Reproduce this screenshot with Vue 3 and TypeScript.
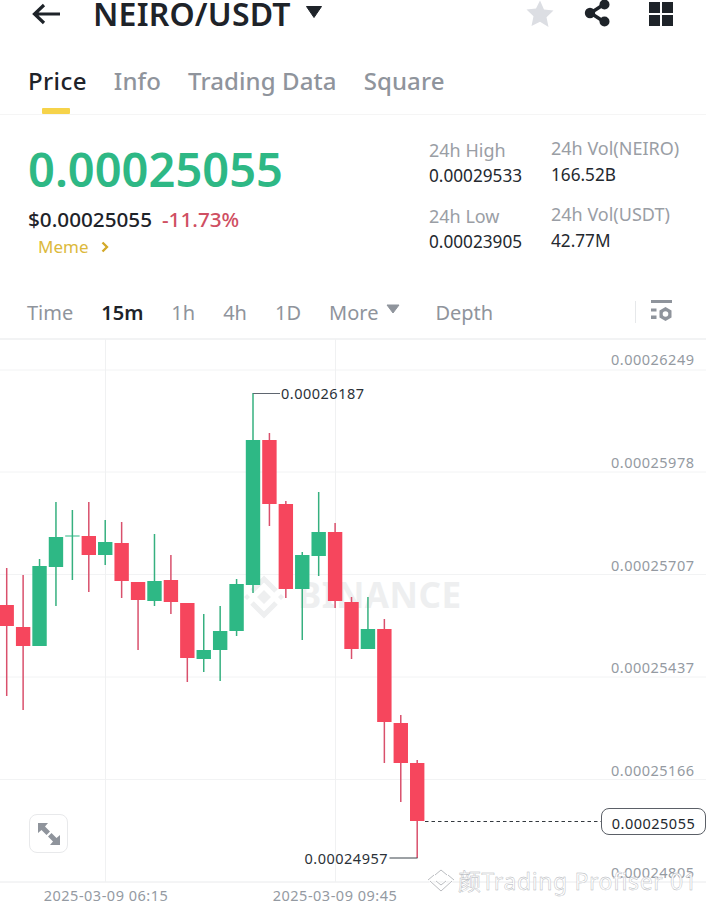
<script setup lang="ts">
interface Candle {
  up: boolean
  x: number
  top: number
  bottom: number
  high: number
  low: number
}

// [up, bodyTop, bodyBottom, wickHigh, wickLow]
const raw: [boolean, number, number, number, number][] = [
  [false, 605, 626, 568, 696],
  [false, 627, 646, 575, 710],
  [true, 566, 646, 559, 646],
  [true, 537, 567, 502, 606],
  [true, 535.5, 536.5, 510, 580],
  [false, 536, 555, 502, 592],
  [true, 542, 555, 520, 565],
  [false, 543, 581, 522, 598],
  [false, 582, 600, 582, 650],
  [true, 581, 601, 534, 606],
  [false, 580, 602, 555, 614],
  [false, 603, 658, 603, 682],
  [true, 650, 659, 614, 672],
  [true, 631, 650, 606, 681],
  [true, 584, 631, 579, 636],
  [true, 440, 585, 393, 593],
  [false, 440, 504, 433, 526],
  [false, 504, 589, 501, 598],
  [true, 555, 589, 552, 640],
  [true, 532, 556, 492, 576],
  [false, 532, 601, 523, 608],
  [false, 602, 649, 597, 659],
  [true, 629, 649, 597, 649],
  [false, 629, 722, 619, 763],
  [false, 723, 763, 715, 802],
  [false, 763, 821, 760, 858]
]

const candles: Candle[] = raw.map(([up, top, bottom, high, low], i) => ({
  up,
  x: 6.7 + i * 16.42,
  top,
  bottom,
  high,
  low
}))

const gridY = [370, 472, 574.5, 677, 779.5]
const gridX = [105.5, 335.5]
const axis = [
  { y: 360, label: '0.00026249' },
  { y: 463, label: '0.00025978' },
  { y: 566, label: '0.00025707' },
  { y: 668, label: '0.00025437' },
  { y: 771, label: '0.00025166' },
  { y: 873, label: '0.00024805' }
]
const tabs = ['Info', 'Trading Data', 'Square']
const ranges = ['1h', '4h', '1D']
</script>

<template>
  <div class="page">
    <header class="top">
      <svg class="back" width="30" height="24" viewBox="0 0 30 24">
        <path d="M13 3 3.500 12 13 21M4 12h25" fill="none" stroke="#1e2329" stroke-width="3.200" />
      </svg>
      <span class="pair">NEIRO/USDT</span>
      <svg class="caret" width="18" height="14" viewBox="0 0 18 14">
        <path d="M1.500 1.500h15L9 12.500z" fill="#1e2329" stroke="#1e2329" stroke-linejoin="round" />
      </svg>
      <svg class="star" width="28" height="28" viewBox="0 0 28 28">
        <path d="M14 .5l4 9 9.500 1-7 6.700 2 9.800L14 21.800 5.500 26l2-9.800-7-6.700 9.500-1z" fill="#dcdee3" />
      </svg>
      <svg class="share" width="28" height="28" viewBox="0 0 28 28">
        <path d="M20.500 4 6.500 13 20.500 22" fill="none" stroke="#1e2329" stroke-width="3.400" />
        <circle cx="20.500" cy="4.500" r="5" fill="#1e2329" />
        <circle cx="6" cy="13" r="5.200" fill="#1e2329" />
        <circle cx="20.500" cy="21.500" r="5" fill="#1e2329" />
      </svg>
      <div class="grid4"><i></i><i></i><i></i><i></i></div>
    </header>

    <nav class="tabs">
      <span class="tab active">Price</span>
      <span v-for="t in tabs" :key="t" class="tab">{{ t }}</span>
    </nav>

    <section class="summary">
      <div class="left">
        <div class="price">0.00025055</div>
        <div class="sub">
          <span class="usd">$0.00025055</span>
          <span class="pct">-11.73%</span>
        </div>
        <div class="meme">
          Meme
          <svg width="10" height="12" viewBox="0 0 10 12">
            <path d="M2.500 1.500 7 6l-4.500 4.500" fill="none" stroke="#d3a928" stroke-width="2.300" />
          </svg>
        </div>
      </div>
      <div class="stats">
        <div class="stat s1"><label>24h High</label><b>0.00029533</b></div>
        <div class="stat s2"><label>24h Vol(NEIRO)</label><b>166.52B</b></div>
        <div class="stat s3"><label>24h Low</label><b>0.00023905</b></div>
        <div class="stat s4"><label>24h Vol(USDT)</label><b>42.77M</b></div>
      </div>
    </section>

    <div class="ranges">
      <span class="r r-time">Time</span>
      <span class="r r-on">15m</span>
      <span v-for="r in ranges" :key="r" class="r">{{ r }}</span>
      <span class="r r-more">More</span>
      <svg class="more-caret" width="14" height="10" viewBox="0 0 14 10">
        <path d="M1 1h12L7 9z" fill="#8f949c" stroke="#8f949c" stroke-linejoin="round" />
      </svg>
      <span class="r r-depth">Depth</span>
      <span class="spacer"></span>
      <span class="divider"></span>
      <svg class="settings" width="24" height="24" viewBox="0 0 24 24">
        <rect x="2" y="1" width="21" height="3" fill="#8f949c" />
        <rect x="2" y="9.500" width="5.500" height="3" fill="#8f949c" />
        <rect x="2" y="16.500" width="5.500" height="3.500" fill="#8f949c" />
        <path d="M16.500 8l6 3.500v7l-6 3.500-6-3.500v-7z" fill="#8f949c" />
        <circle cx="16.500" cy="15" r="2.800" fill="#fff" />
      </svg>
    </div>

    <div class="chart">
      <svg class="plot" width="706" height="903" viewBox="0 0 706 903">
        <line x1="0" x2="706" y1="339" y2="339" stroke="#eeeff1" stroke-width="1.500" />
        <line v-for="y in gridY" :key="y" x1="0" x2="706" :y1="y" :y2="y" stroke="#f2f3f4" />
        <line x1="0" x2="706" y1="882" y2="882" stroke="#e9eaec" />
        <line v-for="x in gridX" :key="x" :x1="x" :x2="x" y1="339" y2="882" stroke="#f0f1f2" />

        <g class="mark">
          <path d="M252 591l12-12 12 12M252 603l12 12 12-12" fill="none" stroke="#eeeff0" stroke-width="5" />
          <path d="M264 590l7 7-7 7-7-7zM247 594l3 3-3 3-3-3zM281 594l3 3-3 3-3-3z" fill="#eeeff0" />
          <text x="298" y="608" class="mark-text">BINANCE</text>
        </g>

        <g v-for="(c, i) in candles" :key="i">
          <line
            :x1="c.x"
            :x2="c.x"
            :y1="c.high"
            :y2="c.low"
            :stroke="c.up ? '#36b07f' : '#d9506c'"
            stroke-width="1.500"
          />
          <rect
            :x="c.x - 7.200"
            :y="c.top"
            width="14.400"
            :height="c.bottom - c.top"
            :fill="c.up ? '#2eb885' : '#f6465d'"
          />
        </g>

        <path d="M253 393.500h27" fill="none" stroke="#5f6670" />
        <path d="M417.500 858h-28" fill="none" stroke="#3b424a" />
        <line x1="425" x2="601" y1="821.500" y2="821.500" stroke="#33393f" stroke-dasharray="3.500 3" />

        <text x="281" y="399" class="tag">0.00026187</text>
        <text x="304.500" y="864" class="tag">0.00024957</text>
        <text v-for="a in axis" :key="a.y" x="694.500" :y="a.y + 5" text-anchor="end" class="axis">{{ a.label }}</text>
        <text x="106" y="901" text-anchor="middle" class="axis">2025-03-09 06:15</text>
        <text x="335" y="901" text-anchor="middle" class="axis">2025-03-09 09:45</text>
      </svg>

      <div class="last">0.00025055</div>

      <button class="expand" type="button" aria-label="Expand">
        <svg width="24" height="24" viewBox="0 0 24 24">
          <path d="M1 1h10L8 4.500l5 5-3.500 3.500-5-5L1 11z" fill="#8f949c" />
          <path d="M23 23H13l3-3.500-5-5 3.500-3.500 5 5L23 13z" fill="#8f949c" />
        </svg>
      </button>

      <div class="wm">
        <svg width="28" height="24" viewBox="0 0 28 24">
          <g fill="none" stroke="#fff" stroke-width="2.400">
            <path d="M1 11l6-5M27 11l-6-5M8 6l6-5 6 5M9 12l5 4 5-4M3 12l11 10 11-10" />
          </g>
          <g fill="none" stroke="#a8abb0" stroke-width=".8">
            <path d="M1 11l6-5M27 11l-6-5M8 6l6-5 6 5M9 12l5 4 5-4M3 12l11 10 11-10" />
          </g>
        </svg>
        <span>颜Trading Profiser 01</span>
      </div>
    </div>
  </div>
</template>

<style>
html,
body {
  margin: 0;
  background: #fff;
}
</style>

<style scoped>
.page {
  width: 706px;
  height: 903px;
  overflow: hidden;
  display: flex;
  flex-direction: column;
  background: #fff;
  font-family: 'Noto Sans', Roboto, sans-serif;
  color: #1e2329;
}

.top {
  height: 28px;
  display: flex;
  align-items: center;
  padding-left: 31px;
  flex: none;
}
.back {
  flex: none;
}
.pair {
  margin-left: 32px;
  font-size: 32px;
  font-weight: 600;
  line-height: 28px;
  letter-spacing: 0.2px;
  width: 200px;
  flex: none;
  white-space: nowrap;
}
.caret {
  margin-left: 12px;
  margin-top: -4px;
  flex: none;
}
.star {
  margin-left: auto;
  flex: none;
}
.share {
  margin-left: 30px;
  flex: none;
}
.grid4 {
  margin: 0 33px 0 37px;
  width: 24px;
  height: 24px;
  display: grid;
  grid-template-columns: 1fr 1fr;
  gap: 2px;
  flex: none;
}
.grid4 i {
  background: #1e2329;
}

.tabs {
  display: flex;
  height: 87px;
  padding: 0 0 0 28px;
  gap: 27px;
  border-bottom: 1px solid #f5f5f5;
  flex: none;
  box-sizing: border-box;
}
.tab {
  position: relative;
  padding-top: 35px;
  font-size: 24px;
  line-height: 36px;
  letter-spacing: 0.1px;
  color: #8f949c;
  font-weight: 500;
}
.tab.active {
  color: #1e2329;
  letter-spacing: 0.4px;
}
.tab.active::after {
  content: '';
  position: absolute;
  left: 14px;
  width: 28px;
  height: 6px;
  bottom: 0;
  background: #f6d34a;
  border-radius: 1px;
}

.summary {
  height: 167px;
  flex: none;
  display: flex;
  justify-content: space-between;
  box-sizing: border-box;
  padding-left: 28px;
}
.price {
  margin-top: 27px;
  font-size: 47px;
  line-height: 54px;
  font-weight: 600;
  color: #2eb885;
}
.sub {
  margin-top: 9px;
  display: flex;
  gap: 10px;
  font-size: 20.700px;
  line-height: 28px;
  font-weight: 500;
}
.pct {
  color: #cf4f62;
}
.meme {
  margin: 2px 0 0 10px;
  font-size: 17px;
  line-height: 24px;
  color: #dcb93c;
  display: flex;
  align-items: center;
  gap: 11px;
}
.stats {
  width: 277px;
  flex: none;
  display: grid;
  grid-template-columns: 122px 1fr;
  grid-template-rows: 66px 66px;
  padding-top: 22px;
  box-sizing: border-box;
}
.stat {
  display: flex;
  flex-direction: column;
}
.stat label {
  font-size: 18px;
  line-height: 26px;
  color: #9a9ea5;
}
.stat b {
  font-size: 17.200px;
  line-height: 25px;
  font-weight: 400;
  color: #24292f;
}
.s2 {
  margin-top: -2px;
}
.s4 {
  margin-top: -2px;
}
.s2 b,
.s4 b {
  margin-top: 1px;
}

.ranges {
  height: 56px;
  display: flex;
  align-items: center;
  box-sizing: border-box;
  padding: 4px 33px 0 27px;
  font-size: 20px;
  color: #8f949c;
  flex: none;
}
.r {
  margin-right: 28px;
}
.r-on {
  color: #1e2329;
  font-weight: 600;
}
.r-more {
  margin-right: 8px;
}
.more-caret {
  margin-top: -6px;
  flex: none;
}
.r-depth {
  margin: 0 0 0 35px;
}
.spacer {
  flex: 1;
}
.divider {
  width: 1px;
  height: 22px;
  background: #e6e8ea;
  margin-right: 13px;
}
.settings {
  margin-top: -2px;
  flex: none;
}

.chart {
  flex: 1;
  min-height: 0;
}
.plot {
  position: absolute;
  left: 0;
  top: 0;
  pointer-events: none;
}
.axis {
  font-size: 14.500px;
  fill: #949aa2;
  letter-spacing: 0.5px;
}
.tag {
  font-size: 14.500px;
  fill: #2b3137;
  letter-spacing: 0.5px;
}
.mark-text {
  font-size: 35px;
  font-weight: 700;
  fill: #eeeff0;
  letter-spacing: 0.5px;
}
.last {
  position: absolute;
  left: 601px;
  top: 808px;
  width: 105px;
  height: 27px;
  box-sizing: border-box;
  border: 1px solid #5b6067;
  border-radius: 8px;
  background: #fff;
  font-size: 14.500px;
  line-height: 29px;
  letter-spacing: 0.5px;
  text-align: center;
  color: #22272d;
}
.expand {
  position: absolute;
  left: 29px;
  top: 814px;
  width: 39px;
  height: 39px;
  padding: 0;
  border: 1px solid #e8e9eb;
  border-radius: 8px;
  background: #fff;
  display: flex;
  align-items: center;
  justify-content: center;
}
.wm {
  position: absolute;
  left: 427px;
  top: 866px;
  display: flex;
  align-items: center;
  gap: 3px;
  height: 30px;
}
.wm span {
  font-family: 'Noto Sans', 'Noto Sans CJK SC', sans-serif;
  font-size: 23px;
  line-height: 30px;
  letter-spacing: 0.6px;
  color: #fff;
  white-space: nowrap;
  -webkit-text-stroke: 0.4px #aeb1b6;
}
</style>
